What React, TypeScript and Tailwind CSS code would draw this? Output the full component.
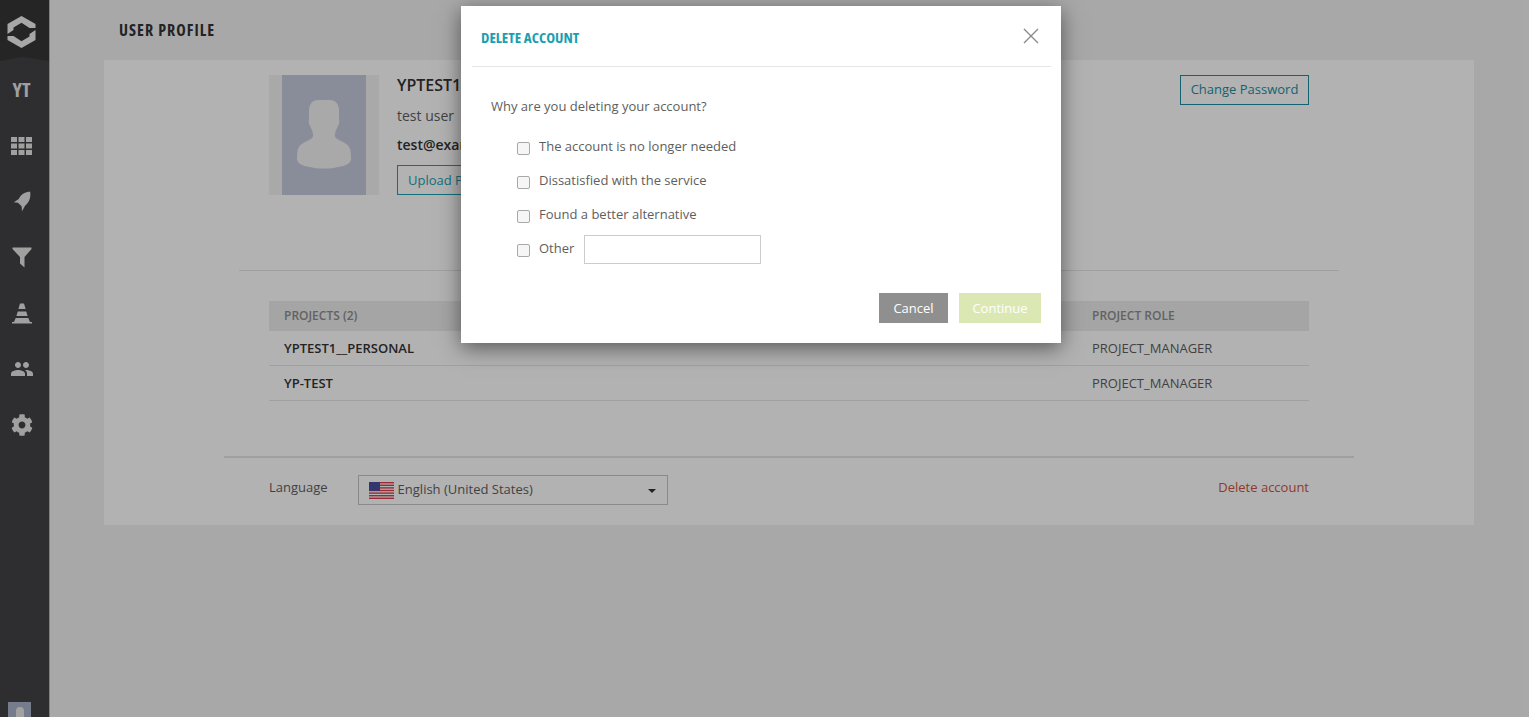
import React from "react";
import { MdPeople } from "react-icons/md";
import { FaCog } from "react-icons/fa";

const font = { fontFamily: '"Open Sans", "Noto Sans", sans-serif' };

function Logo() {
  return (
    <svg width="49" height="62" viewBox="0 0 49 62" className="block">
      <path d="M0 0H49V61L22 57L0 61Z" fill="#363636" />
      <path d="M21.5 16 L35.5 24 V28 H29.5 L21.5 22.7 L13.5 27.5 V30 L7.5 34 V24 Z" fill="#f0f0f0" />
      <path d="M21.5 48 L7.5 40 V36 H13.5 L21.5 41.3 L29.5 36.5 V34 L35.5 30 V40 Z" fill="#f0f0f0" />
    </svg>
  );
}

function GridIcon() {
  return (
    <svg width="22" height="18" viewBox="0 0 22 18" fill="#e6e6e6">
      {[0, 6.5, 13].map((y) =>
        [0, 7.5, 15].map((x) => <rect key={`${x}-${y}`} x={x} y={y} width="6" height="5" />)
      )}
    </svg>
  );
}

function RocketIcon() {
  return (
    <svg width="20" height="22" viewBox="0 0 24 27" fill="#e6e6e6">
      <path d="M22 2 C16 2 11 5 8 11 L2 15 L7 15.5 L11.5 20 L12 26 L16 19 C21 15 23 9 22 2 Z" />
    </svg>
  );
}

function FilterIcon() {
  return (
    <svg width="20" height="21" viewBox="0 0 20 21" fill="#e6e6e6">
      <path d="M0.5 0.5H19.5V2L12.5 10V20.5L8 16.5V10L0.5 2Z" />
    </svg>
  );
}

function ConeIcon() {
  return (
    <svg width="20" height="21" viewBox="0 0 20 21" fill="#e6e6e6">
      <path d="M8 0.5H12L13.6 6H6.4Z" />
      <path d="M5.8 8.5H14.2L15.6 13H4.4Z" />
      <path d="M3.7 15H16.3L18 19H20V20.5H0V19H2Z" />
    </svg>
  );
}

function Flag() {
  return (
    <svg width="25" height="17" viewBox="0 0 25 17">
      <rect width="25" height="17" fill="#fff" />
      {[0, 2.6, 5.2, 7.8, 10.4, 13, 15.6].map((y) => (
        <rect key={y} x="0" y={y} width="25" height="1.4" fill="#d8404f" />
      ))}
      <rect width="11" height="9" fill="#4a4f9c" />
    </svg>
  );
}

function Sidebar() {
  const items = [
    <span key="yt" className="text-[20px] font-bold text-[#e6e6e6] [font-stretch:75%]">YT</span>,
    <GridIcon key="g" />,
    <RocketIcon key="r" />,
    <FilterIcon key="f" />,
    <ConeIcon key="c" />,
    <MdPeople key="p" className="text-[#e6e6e6] text-[24px]" />,
    <FaCog key="s" className="text-[#e6e6e6] text-[22px]" />,
  ];
  return (
    <aside className="w-[49px] shrink-0 h-full bg-[#434346] flex flex-col border-r border-[#b8b8b8] box-content">
      <Logo />
      {items.map((it, i) => (
        <div key={i} className="w-[43px] h-[55.8px] flex items-center justify-center">{it}</div>
      ))}
      <div className="mt-auto ml-[8px] w-[23px] h-[15px] bg-[#a9b2c8] flex justify-center items-end">
        <div className="w-[8px] h-[10px] rounded-t-full bg-[#e8e8e8]" />
      </div>
    </aside>
  );
}

function Avatar() {
  return (
    <div className="w-[110px] h-[120px] bg-[#f2f2f2] flex justify-center shrink-0">
      <div className="w-[84px] h-[120px] bg-[#c3cbdc] flex items-end justify-center">
        <svg width="56" height="71" viewBox="0 0 56 71" className="mb-[25px]" fill="#f2f2f2">
          <path d="M22 1 H34 C39 1 43 5 43 11 V20 C44 24 42 27 41 29 C39 33 38 37 40 39 C43 42 50 43 53 48 C55 51 55 56 55 60 C55 64 50 67 42 68 C34 70 22 70 14 68 C6 67 1 64 1 60 C1 56 1 51 3 48 C6 43 13 42 16 39 C18 37 17 33 15 29 C14 27 12 24 13 20 V11 C13 5 17 1 22 1 Z" />
        </svg>
      </div>
    </div>
  );
}

function Modal() {
  const reasons = ["The account is no longer needed", "Dissatisfied with the service", "Found a better alternative"];
  return (
    <div className="absolute inset-0 bg-black/30 pl-[461px] pt-[6px]">
      <div className="w-[600px] h-[337px] bg-white shadow-[0_5px_20px_rgba(0,0,0,0.5)] flex flex-col text-[13px] text-[#5e5e5e]">
        <div className="ml-[11px] mr-[10px] h-[61px] border-b border-[#e5e5e5] flex items-center justify-between pl-[9px] pr-[12px] shrink-0">
          <h2 className="text-[15px] font-bold text-[#1a9fb0] [font-stretch:75%] uppercase mt-[2px]">Delete Account</h2>
          <svg width="16" height="16" viewBox="0 0 16 16" stroke="#8a8a8a" strokeWidth="1.4" className="-mt-[1px]">
            <path d="M1 1L15 15M15 1L1 15" />
          </svg>
        </div>
        <p className="ml-[30px] mt-[29px] leading-[20px]">Why are you deleting your account?</p>
        <div className="ml-[56px] mt-[14px] flex flex-col">
          {reasons.map((r) => (
            <label key={r} className="h-[34px] flex items-center gap-[9px]">
              <span className="w-[13px] h-[13px] mt-[3px] rounded-[2px] border border-[#a8a8a8] bg-[#f6f6f6] shrink-0" />
              <span className="leading-[20px] -mt-[2px]">{r}</span>
            </label>
          ))}
          <label className="h-[30px] mt-[3px] flex items-center gap-[9px]">
            <span className="w-[13px] h-[13px] mt-[1px] rounded-[2px] border border-[#a8a8a8] bg-[#f6f6f6] shrink-0" />
            <span className="leading-[20px] -mt-[5px]">Other</span>
            <span className="ml-[1px] -mt-[2px] w-[177px] h-[29px] border border-[#cccccc] bg-white" />
          </label>
        </div>
        <div className="flex justify-end gap-[11px] mr-[20px] mt-[28px]">
          <button className="w-[69px] h-[30px] pt-[1px] bg-[#8f8f8f] text-white">Cancel</button>
          <button className="w-[82px] h-[30px] pt-[1px] bg-[#dce8b4] text-white">Continue</button>
        </div>
      </div>
    </div>
  );
}

export default function App() {
  return (
    <div style={font} className="relative w-full h-screen overflow-hidden flex bg-[#f1f1f1] text-[13px] text-[#5e5e5e]">
      <Sidebar />
      <main className="flex-1 min-w-0 pl-[54px] pr-[55px]">
        <h1 className="h-[60px] pl-[15px] pt-[18px] text-[16px] leading-[24px] font-bold tracking-[1.05px] text-[#333333] [font-stretch:75%]">USER PROFILE</h1>
        <section className="bg-white h-[465px] flex flex-col px-[165px]">
          <div className="h-[211px] border-b border-[#e6e6e6] -mx-[30px] px-[30px] pt-[15px] flex items-start justify-between">
            <div className="flex gap-[18px]">
              <Avatar />
              <div className="flex flex-col items-start">
                <div className="text-[16px] font-semibold leading-[20px] text-[#333333]">YPTEST1</div>
                <div className="mt-[11px] text-[14px] leading-[20px]">test user</div>
                <div className="mt-[9px] text-[14px] font-semibold leading-[20px] text-[#333333]">test@example.com</div>
                <button className="mt-[10px] h-[30px] pt-[1px] px-[10px] border border-[#1a9fb0] text-[#1a9fb0]">Upload Photo</button>
              </div>
            </div>
            <button className="h-[30px] w-[129px] border border-[#1a8fa0] text-[#1a8fa0]">Change Password</button>
          </div>
          <div className="mt-[30px]">
            <div className="h-[30px] bg-[#ececec] flex items-center justify-between px-[15px] text-[12px] font-semibold text-[#8e8e8e]">
              <span>PROJECTS (2)</span>
              <span className="w-[202px]">PROJECT ROLE</span>
            </div>
            {["YPTEST1__PERSONAL", "YP-TEST"].map((p) => (
              <div key={p} className="h-[35px] pt-[2px] border-b border-[#e6e6e6] flex items-center justify-between px-[15px]">
                <span className="font-semibold text-[#333333]">{p}</span>
                <span className="w-[202px]">PROJECT_MANAGER</span>
              </div>
            ))}
          </div>
          <div className="mt-[55px] -mx-[45px] px-[45px] border-t-2 border-[#e6e6e6] flex items-center justify-between pt-[17px]">
            <div className="flex items-center gap-[30px]">
              <span className="-mt-[5px]">Language</span>
              <div className="w-[310px] h-[30px] border border-[#c4c4c4] flex items-center pl-[10px] pr-[11px]">
                <Flag />
                <span className="ml-[4px]">English (United States)</span>
                <span className="ml-auto mt-[2px] w-0 h-0 border-x-[4px] border-x-transparent border-t-[4px] border-t-[#333333]" />
              </div>
            </div>
            <span className="text-[#d0533a] -mt-[5px]">Delete account</span>
          </div>
        </section>
      </main>
      <Modal />
    </div>
  );
}
